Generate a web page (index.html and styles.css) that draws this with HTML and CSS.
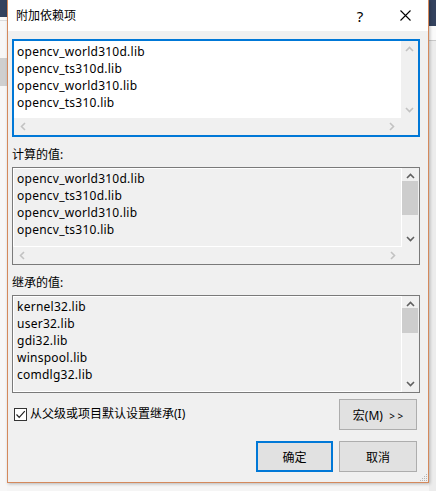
FILE: index.html
```html
<!DOCTYPE html>
<html lang="zh-CN">
<head>
    <meta charset="UTF-8">
    <title>附加依赖项</title>
    <link rel="stylesheet" href="styles.css">
</head>
<body>
    <div class="dialog">
        <div class="titlebar">
            <span class="title">附加依赖项</span>
            <span class="help">?</span>
            <span class="close">
                <svg width="11" height="11" viewBox="0 0 11 11"><path d="M0.5 0.5 L10.5 10.5 M10.5 0.5 L0.5 10.5" stroke="#000" stroke-width="1.1" fill="none"/></svg>
            </span>
        </div>

        <div class="content">
            <div class="listbox focused">
                <div class="lines">
                    <div>opencv_world310d.lib</div>
                    <div>opencv_ts310d.lib</div>
                    <div>opencv_world310.lib</div>
                    <div>opencv_ts310.lib</div>
                </div>
                <div class="vscroll">
                    <svg class="arrow off" width="9" height="6" viewBox="0 0 9 6"><path d="M1 5 L4.5 1.5 L8 5" /></svg>
                    <span class="track"></span>
                    <svg class="arrow off" width="9" height="6" viewBox="0 0 9 6"><path d="M1 1 L4.5 4.5 L8 1" /></svg>
                </div>
                <div class="hscroll">
                    <svg class="arrow off" width="6" height="9" viewBox="0 0 6 9"><path d="M5 1 L1.5 4.5 L5 8" /></svg>
                    <svg class="arrow off" width="6" height="9" viewBox="0 0 6 9"><path d="M1 1 L4.5 4.5 L1 8" /></svg>
                </div>
                <div class="corner"></div>
            </div>

            <div class="label">计算的值:</div>
            <div class="listbox disabled">
                <div class="lines">
                    <div>opencv_world310d.lib</div>
                    <div>opencv_ts310d.lib</div>
                    <div>opencv_world310.lib</div>
                    <div>opencv_ts310.lib</div>
                </div>
                <div class="vscroll">
                    <svg class="arrow" width="9" height="6" viewBox="0 0 9 6"><path d="M1 5 L4.5 1.5 L8 5" /></svg>
                    <span class="track"><span class="thumb thumb-computed"></span></span>
                    <svg class="arrow" width="9" height="6" viewBox="0 0 9 6"><path d="M1 1 L4.5 4.5 L8 1" /></svg>
                </div>
                <div class="hscroll">
                    <svg class="arrow off" width="6" height="9" viewBox="0 0 6 9"><path d="M5 1 L1.5 4.5 L5 8" /></svg>
                    <svg class="arrow off" width="6" height="9" viewBox="0 0 6 9"><path d="M1 1 L4.5 4.5 L1 8" /></svg>
                </div>
                <div class="corner"></div>
            </div>

            <div class="label">继承的值:</div>
            <div class="listbox disabled no-h">
                <div class="lines">
                    <div>kernel32.lib</div>
                    <div>user32.lib</div>
                    <div>gdi32.lib</div>
                    <div>winspool.lib</div>
                    <div>comdlg32.lib</div>
                </div>
                <div class="vscroll">
                    <svg class="arrow" width="9" height="6" viewBox="0 0 9 6"><path d="M1 5 L4.5 1.5 L8 5" /></svg>
                    <span class="track"><span class="thumb thumb-inherited"></span></span>
                    <svg class="arrow" width="9" height="6" viewBox="0 0 9 6"><path d="M1 1 L4.5 4.5 L8 1" /></svg>
                </div>
            </div>

            <div class="option-row">
                <label class="check">
                    <span class="box">
                        <svg width="11" height="11" viewBox="0 0 11 11"><path d="M1.5 5.5 L4.2 8.3 L9.8 2.2" stroke="#222" stroke-width="1.2" fill="none"/></svg>
                    </span>
                    从父级或项目默认设置继承(I)
                </label>
                <button class="btn">宏(M)&nbsp;&nbsp;<span class="more">&gt; &gt;</span></button>
            </div>

            <div class="actions">
                <button class="btn primary">确定</button>
                <button class="btn">取消</button>
            </div>
        </div>

        <svg class="grip" width="9" height="9" viewBox="0 0 9 9">
            <g fill="#b5b5b5">
                <rect x="7" y="1" width="1" height="1"/>
                <rect x="5" y="3" width="1" height="1"/><rect x="7" y="3" width="1" height="1"/>
                <rect x="3" y="5" width="1" height="1"/><rect x="5" y="5" width="1" height="1"/><rect x="7" y="5" width="1" height="1"/>
                <rect x="1" y="7" width="1" height="1"/><rect x="3" y="7" width="1" height="1"/><rect x="5" y="7" width="1" height="1"/><rect x="7" y="7" width="1" height="1"/>
            </g>
        </svg>
    </div>
</body>
</html>
```

FILE: styles.css
```css
:root {
    --face: #f0f0f0;
    --accent: #0078d7;
    --frame: #d4895c;
    --edge: #7a7a7a;
    --btn-face: #e1e1e1;
    --btn-edge: #adadad;
}

body {
    margin: 0;
    width: 436px;
    height: 491px;
    overflow: hidden;
    font-family: "Noto Sans", "Noto Sans CJK SC", sans-serif;
    font-size: 12px;
    color: #000;
    background:
        linear-gradient(#34425e 0 17px, #fafafa 17px 20px, #dcdcdc 20px 21px, #f7f7f7 21px 58px, #cfcfcf 58px 86px, #f7f7f7 86px) 0 0 / 7px 100% no-repeat,
        linear-gradient(#34425e 0 26px, #fafafa 26px 40px, #c8c8c8 40px 41px, #ececec 41px) 100% 0 / 7px 100% no-repeat,
        #f5f5f5;
}

.dialog {
    position: relative;
    margin-left: 7px;
    width: 420px;
    height: 482px;
    border: 1px solid var(--frame);
    border-top: none;
    background: var(--face);
    box-shadow: 1px 1px 3px rgba(0, 0, 0, 0.25);
}

.titlebar {
    display: flex;
    align-items: center;
    height: 31px;
    padding: 0 8px;
    background: #fff;
}

.title {
    flex: 1;
    line-height: 16px;
}

.help {
    width: 30px;
    margin-right: 15px;
    text-align: center;
    font-size: 15px;
}

.close {
    display: flex;
    justify-content: center;
    width: 30px;
}

.content {
    padding: 8px 8px 0 4px;
}

.listbox {
    display: grid;
    grid-template-columns: 1fr 17px;
    grid-template-rows: 1fr 17px;
    height: 98px;
    box-sizing: border-box;
    border: 1px solid var(--edge);
}

.listbox.no-h {
    grid-template-rows: 1fr;
}

.listbox.focused {
    border: 2px solid var(--accent);
}

.lines {
    padding: 2px 3px;
    line-height: 17px;
    letter-spacing: 0.25px;
    white-space: nowrap;
    overflow: hidden;
}

.focused .lines {
    background: #fff;
}

.disabled .lines {
    border: 1px solid #fff;
    padding: 1px 3px;
}

.vscroll {
    display: flex;
    flex-direction: column;
    align-items: center;
    background: var(--face);
    padding: 5px 0;
}

.track {
    flex: 1;
    align-self: stretch;
    padding: 0 1px 0 0;
}

.thumb {
    display: block;
    background: #cdcdcd;
}

.thumb-computed {
    margin-top: 2px;
    height: 34px;
}

.thumb-inherited {
    margin-top: 1px;
    height: 25px;
}

.hscroll {
    display: flex;
    justify-content: space-between;
    align-items: center;
    padding: 0 6px;
    background: var(--face);
}

.corner {
    background: var(--face);
}

.arrow path {
    fill: none;
    stroke: #606060;
    stroke-width: 1.6;
}

.arrow.off path {
    stroke: #c2c2c2;
}

.label {
    padding: 10px 0 4px;
    line-height: 16px;
}

.option-row {
    display: flex;
    align-items: center;
    justify-content: space-between;
    margin-top: 6px;
    padding-right: 3px;
}

.check {
    display: flex;
    align-items: center;
    gap: 3px;
    margin-left: 2px;
    margin-top: -3px;
}

.box {
    display: flex;
    align-items: center;
    justify-content: center;
    width: 13px;
    height: 13px;
    box-sizing: border-box;
    border: 1px solid #333;
    background: #fff;
    margin-top: 3px;
}

.btn {
    width: 78px;
    height: 31px;
    padding: 0;
    border: 1px solid var(--btn-edge);
    background: var(--btn-face);
    font: inherit;
    color: #000;
}

.btn .more {
    font-size: 10px;
}

.btn.primary {
    width: 77px;
    border: 2px solid var(--accent);
}

.actions {
    display: flex;
    justify-content: flex-end;
    gap: 6px;
    margin-top: 11px;
    padding-right: 3px;
}

.grip {
    position: absolute;
    right: 0;
    bottom: 0;
}
```
